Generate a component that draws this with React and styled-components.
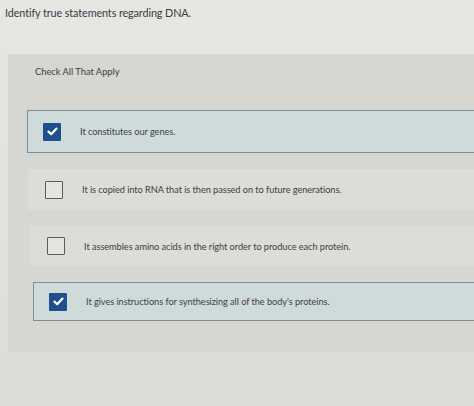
import React from 'react';
import styled, { createGlobalStyle } from 'styled-components';

const GlobalStyle = createGlobalStyle`
  html, body {
    margin: 0;
    padding: 0;
    background: #e3e3df;
  }
  body {
    font-family: Lato, "Open Sans", "Liberation Sans", sans-serif;
    color: #3d3e40;
  }
`;

const Page = styled.div`
  width: 474px;
  height: 406px;
  overflow: hidden;
  background: linear-gradient(180deg, #e6e6e3 0%, #e1e1dd 60%, #dcdcd7 100%);
`;

const Question = styled.div`
  padding: 6px 0 0 5px;
  height: 54px;
  box-sizing: border-box;
  font-size: 10.8px;
  letter-spacing: -0.1px;
  color: #3a3b3e;
`;

const Panel = styled.div`
  margin-left: 8px;
  background: #d6d6d2;
  padding: 12px 0 0;
  height: 298px;
  box-sizing: border-box;
`;

const Instruction = styled.div`
  padding-left: 27px;
  font-size: 9.3px;
  line-height: 11px;
  color: #404144;
  margin-bottom: 33px;
`;

const List = styled.div`
  display: flex;
  flex-direction: column;
  gap: 16px;
`;

const Row = styled.label`
  display: flex;
  align-items: center;
  height: ${p => p.$height}px;
  box-sizing: border-box;
  margin-left: ${p => p.$indent}px;
  padding-left: ${p => p.$pad}px;
  background: ${p => (p.$checked ? '#cfdbdb' : '#dcdcd8')};
  border: 1px solid ${p => (p.$checked ? '#7d8c96' : 'transparent')};
  border-right: none;
  cursor: pointer;
`;

const Box = styled.span`
  width: 18px;
  height: 18px;
  flex: none;
  box-sizing: border-box;
  display: flex;
  align-items: center;
  justify-content: center;
  border: ${p => (p.$checked ? 'none' : '1.5px solid #5a5b5e')};
  background: ${p => (p.$checked ? '#1f4f8c' : '#e4e4e0')};
  border-radius: 1px;
`;

const Text = styled.span`
  margin-left: 19px;
  font-size: 9.2px;
  letter-spacing: -0.05px;
  color: #3e3f42;
  white-space: nowrap;
`;

const Check = () => (
  <svg width="11" height="9" viewBox="0 0 11 9">
    <path d="M1.5 4.6 L4.2 7.2 L9.5 1.6" fill="none" stroke="#fff" strokeWidth="2.2" strokeLinecap="round" strokeLinejoin="round" />
  </svg>
);

const options = [
  { text: 'It constitutes our genes.', checked: true, indent: 19, pad: 15, height: 43 },
  { text: 'It is copied into RNA that is then passed on to future generations.', checked: false, indent: 20, pad: 16, height: 41 },
  { text: 'It assembles amino acids in the right order to produce each protein.', checked: false, indent: 22, pad: 16, height: 40 },
  { text: "It gives instructions for synthesizing all of the body's proteins.", checked: true, indent: 25, pad: 15, height: 39 },
];

export default function App() {
  return (
    <Page>
      <GlobalStyle />
      <Question>Identify true statements regarding DNA.</Question>
      <Panel>
        <Instruction>Check All That Apply</Instruction>
        <List>
          {options.map(o => (
            <Row key={o.text} $checked={o.checked} $indent={o.indent} $pad={o.pad} $height={o.height}>
              <Box $checked={o.checked}>{o.checked && <Check />}</Box>
              <Text>{o.text}</Text>
            </Row>
          ))}
        </List>
      </Panel>
    </Page>
  );
}
